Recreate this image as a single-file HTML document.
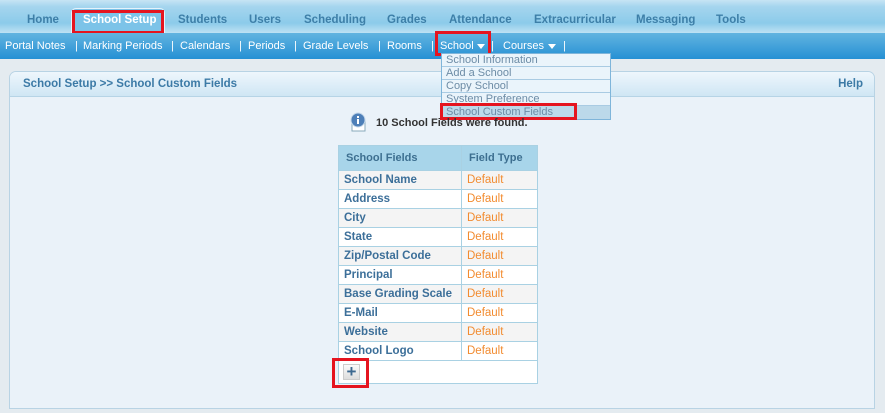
<!DOCTYPE html>
<html><head><style>
*{margin:0;padding:0;box-sizing:border-box}
body{width:885px;height:413px;overflow:hidden;font-family:"Liberation Sans",Arial,sans-serif;background:linear-gradient(#d2dde5,#e4ebf0 40px,#e4ebf0);position:relative}
.top{position:absolute;left:0;top:0;width:885px;height:33px;background:linear-gradient(#c7e4f4,#a5d5ee 20%,#8ccbea 70%,#bfe2f3)}
.top span{position:absolute;top:14px;font-size:11.5px;font-weight:bold;color:#3d7fa8;white-space:nowrap}
.tab{position:absolute;left:71px;top:8px;width:94px;height:26px;border:1px solid #e5f3fb;border-bottom:none;border-radius:5px 5px 0 0;background:#7cc3e8}
.sub{position:absolute;left:0;top:33px;width:885px;height:26px;background:linear-gradient(#62b4e0,#2590d4)}
.sub span{position:absolute;top:7px;font-size:11px;color:#fff;white-space:nowrap}
.tri{position:absolute;top:44px;width:0;height:0;border-left:4px solid transparent;border-right:4px solid transparent;border-top:5px solid #fff}
.red{position:absolute;border:3px solid #e5141f}
.panel{position:absolute;left:9px;top:71px;width:866px;height:338px;border:1px solid #b8d3e4;border-radius:7px 7px 0 0;background:#eaf2f9}
.ph{height:25px;background:linear-gradient(#eef6fc,#cfe6f4);border-bottom:1px solid #b6d4e6;border-radius:6px 6px 0 0;font-size:11.5px;font-weight:bold;color:#3c7aa6;padding:6px 13px}
.dd{position:absolute;left:441px;top:53px;width:170px;background:#eaf4fb;border:1px solid #7fb5da}
.dd div{height:13px;font-size:11px;line-height:12px;color:#6d8ca6;padding-left:4px;border-bottom:1px solid #a9cbe3}
table{position:absolute;left:338px;top:145px;width:200px;border-collapse:collapse;font-size:11.5px}
td,th{border:1px solid #a9d1e3;height:19px;padding:0 5px;text-align:left}
th{height:25px;background:#a8d5ea;color:#3d6f90;font-weight:bold;padding-left:7px;font-size:11px}
td{background:#fff;color:#3c6f99;font-weight:bold}
td.d{color:#f28b2f;font-weight:normal;width:76px}
tr.g td{background:#f4f4f4}
</style></head><body>
<div class="top">
<div class="tab"></div>
<span style="left:27px">Home</span>
<span style="left:83px;color:#fff">School Setup</span>
<span style="left:178px">Students</span>
<span style="left:249px">Users</span>
<span style="left:304px">Scheduling</span>
<span style="left:387px">Grades</span>
<span style="left:449px">Attendance</span>
<span style="left:534px">Extracurricular</span>
<span style="left:636px">Messaging</span>
<span style="left:716px">Tools</span>
</div>
<div class="red" style="left:72px;top:10px;width:92px;height:24px"></div>
<div class="sub">
<span style="left:5px">Portal Notes</span><span style="left:75px">|</span>
<span style="left:83px">Marking Periods</span><span style="left:171px">|</span>
<span style="left:180px">Calendars</span><span style="left:239px">|</span>
<span style="left:248px">Periods</span><span style="left:294px">|</span>
<span style="left:303px">Grade Levels</span><span style="left:378px">|</span>
<span style="left:387px">Rooms</span><span style="left:431px">|</span>
<span style="left:440px">School</span><span style="left:491px">|</span>
<span style="left:503px">Courses</span><span style="left:563px">|</span>
</div>
<div class="tri" style="left:477px"></div>
<div class="tri" style="left:548px"></div>
<div class="red" style="left:435px;top:31px;width:56px;height:25px"></div>
<div class="panel"><div class="ph">School Setup &gt;&gt; School Custom Fields<span style="float:right;position:relative;left:2px">Help</span></div></div>
<div class="dd">
<div>School Information</div><div>Add a School</div><div>Copy School</div><div>System Preference</div><div style="background:#bcd9ea;border-bottom:none">School Custom Fields</div>
</div>
<div class="red" style="left:440px;top:103px;width:137px;height:17px"></div>
<svg style="position:absolute;left:349px;top:112px" width="18" height="20"><rect x="3" y="8" width="13" height="11" fill="#fff" stroke="#8ab"/><circle cx="9" cy="8" r="7" fill="#4d7fb8" stroke="#c5d8ea"/><rect x="8" y="7" width="2" height="5" fill="#fff"/><rect x="8" y="4" width="2" height="2" fill="#fff"/></svg>
<div style="position:absolute;left:376px;top:117px;font-size:11px;font-weight:bold;color:#333">10 School Fields were found.</div>
<table>
<tr><th>School Fields</th><th>Field Type</th></tr>
<tr class="g"><td>School Name</td><td class="d">Default</td></tr>
<tr><td>Address</td><td class="d">Default</td></tr>
<tr class="g"><td>City</td><td class="d">Default</td></tr>
<tr><td>State</td><td class="d">Default</td></tr>
<tr class="g"><td>Zip/Postal Code</td><td class="d">Default</td></tr>
<tr><td>Principal</td><td class="d">Default</td></tr>
<tr class="g"><td>Base Grading Scale</td><td class="d">Default</td></tr>
<tr><td>E-Mail</td><td class="d">Default</td></tr>
<tr class="g"><td>Website</td><td class="d">Default</td></tr>
<tr><td>School Logo</td><td class="d">Default</td></tr>
<tr><td colspan="2" style="height:23px"></td></tr>
</table>
<div style="position:absolute;left:343px;top:364px;width:17px;height:16px;background:linear-gradient(#fafafa,#ddd);border:1px solid #ccc;color:#3d6990;font-weight:bold;font-size:17px;line-height:14px;text-align:center">+</div>
<div class="red" style="left:332px;top:358px;width:37px;height:30px"></div>
</body></html>
